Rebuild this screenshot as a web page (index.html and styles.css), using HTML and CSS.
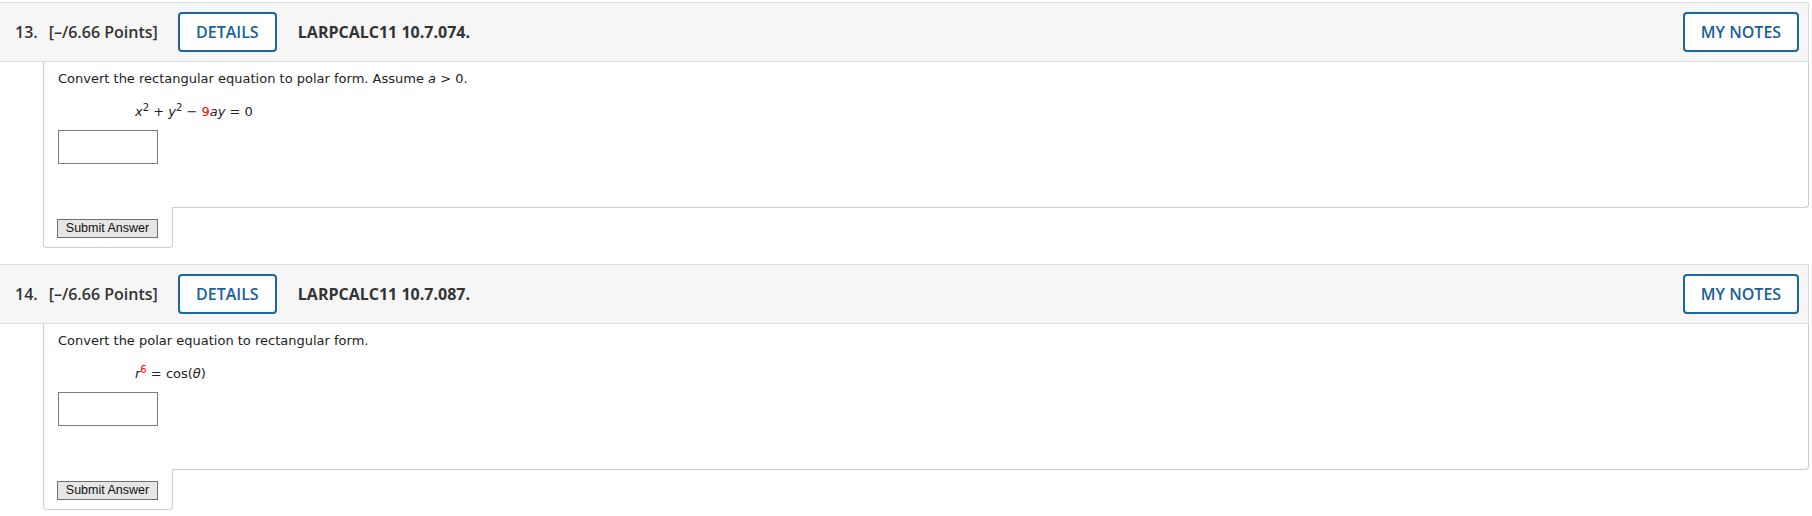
FILE: index.html
```html
<!DOCTYPE html>
<html>
<head>
<meta charset="utf-8">
<link rel="stylesheet" href="styles.css">
</head>
<body>
<div class="question">
  <div class="qhead">
    <span class="qnum">13.</span>
    <span class="pts">[–/6.66 Points]</span>
    <button class="btn">DETAILS</button>
    <span class="code">LARPCALC11 10.7.074.</span>
    <button class="btn notes">MY NOTES</button>
  </div>
  <div class="qbody">
    <p class="prompt">Convert the rectangular equation to polar form. Assume <i>a</i> &gt; 0.</p>
    <p class="eq"><i>x</i><sup>2</sup> + <i>y</i><sup>2</sup> − <span class="red">9</span><i>ay</i> = 0</p>
    <input class="ans" type="text">
  </div>
  <div class="qfoot"><button class="submit">Submit Answer</button></div>
</div>
<div class="question">
  <div class="qhead">
    <span class="qnum">14.</span>
    <span class="pts">[–/6.66 Points]</span>
    <button class="btn">DETAILS</button>
    <span class="code">LARPCALC11 10.7.087.</span>
    <button class="btn notes">MY NOTES</button>
  </div>
  <div class="qbody">
    <p class="prompt">Convert the polar equation to rectangular form.</p>
    <p class="eq"><i>r</i><sup class="red">6</sup> = cos(<i>θ</i>)</p>
    <input class="ans" type="text">
  </div>
  <div class="qfoot"><button class="submit">Submit Answer</button></div>
</div>
</body>
</html>
```

FILE: styles.css
```css
html, body {
  margin: 0;
  padding: 0;
  background: #ffffff;
}
body {
  padding-top: 2px;
}
.question {
  margin-bottom: 16px;
}
.qhead {
  display: flex;
  align-items: center;
  height: 58px;
  margin-right: 3px;
  padding: 0 9px 0 15px;
  background: #f6f6f6;
  border-top: 1px solid #dcdcdc;
  border-bottom: 1px solid #dcdcdc;
  border-right: 1px solid #dcdcdc;
  font-family: "Open Sans", "Noto Sans", sans-serif;
  font-size: 16px;
  font-weight: 600;
  color: #333333;
}
.qnum {
  margin-right: 11px;
}
.pts {
  margin-right: 20px;
}
.btn {
  box-sizing: border-box;
  height: 40px;
  width: 99px;
  padding: 0;
  border: 2px solid #1a68a0;
  border-radius: 4px;
  background: #ffffff;
  color: #1b5f99;
  font-family: "Open Sans", "Noto Sans", sans-serif;
  font-size: 16px;
  font-weight: 600;
  margin-right: 21px;
}
.code {
  font-weight: 700;
  color: #333333;
}
.notes {
  width: 116px;
  margin-left: auto;
  margin-right: 0;
}
.qbody {
  margin-left: 43px;
  margin-right: 3px;
  padding: 9px 14px 43px 14px;
  border-left: 1px solid #cccccc;
  border-right: 1px solid #cccccc;
  border-bottom: 1px solid #cccccc;
  border-bottom-right-radius: 4px;
  font-family: "DejaVu Sans", Verdana, sans-serif;
  font-size: 13px;
  color: #222222;
}
.prompt {
  margin: 0;
  line-height: 16px;
}
.eq {
  margin: 17px 0 0 77px;
  line-height: 16px;
}
.eq sup {
  font-size: 10px;
  line-height: 0;
  vertical-align: 5px;
}
.red {
  color: #ff0000;
}
.ans {
  display: block;
  box-sizing: border-box;
  width: 100px;
  height: 34px;
  margin: 10px 0 0 0;
  border: 1px solid #7a7a7a;
  background: #ffffff;
  padding: 0;
}
.qfoot {
  box-sizing: border-box;
  width: 130px;
  height: 41px;
  margin-left: 43px;
  margin-top: -1px;
  padding: 12px 0 0 13px;
  background: #ffffff;
  border-left: 1px solid #cccccc;
  border-right: 1px solid #cccccc;
  border-bottom: 1px solid #cccccc;
  border-bottom-left-radius: 4px;
  border-bottom-right-radius: 4px;
}
.submit {
  box-sizing: border-box;
  display: block;
  width: 101px;
  height: 19px;
  padding: 0;
  border: 1px solid #707070;
  border-radius: 0;
  background: #e6e6e6;
  color: #111111;
  font-family: "Liberation Sans", Arial, sans-serif;
  font-size: 12.5px;
  line-height: 17px;
}
```
